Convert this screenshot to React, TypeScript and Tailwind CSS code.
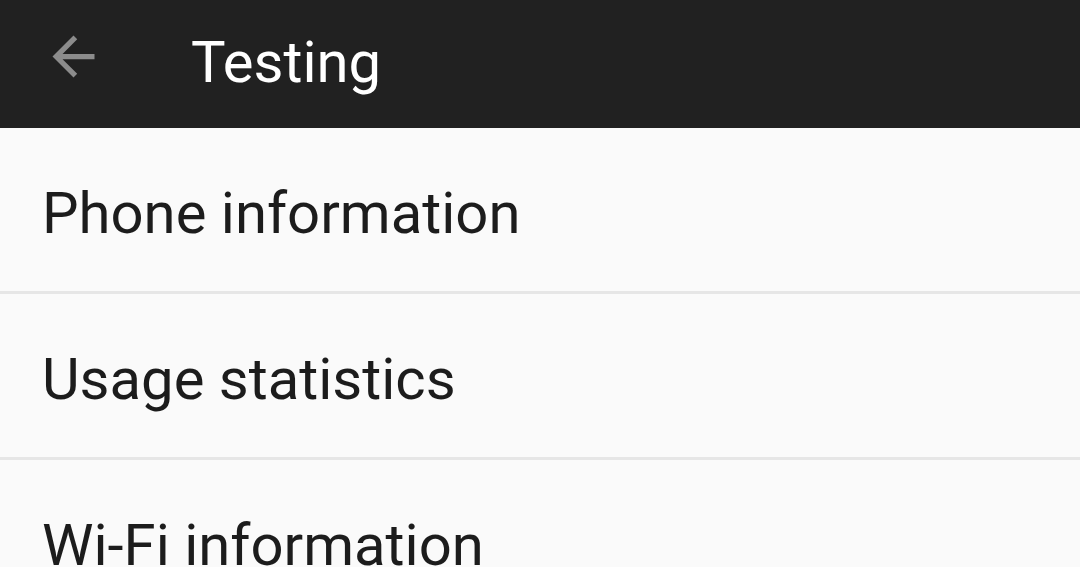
export default function App() {
  const rows = ["Phone information", "Usage statistics", "Wi-Fi information"];
  return (
    <div className="w-[1080px] h-[567px] overflow-hidden bg-[#fafafa]" style={{ fontFamily: "Roboto, sans-serif" }}>
      <div className="h-[128px] bg-[#212121] flex items-center">
        <div className="ml-[42px] mt-[-16px] w-[63px] h-[63px]">
          <svg viewBox="0 0 24 24" width="63" height="63" fill="#8c8c8c">
            <path d="M20 11H7.83l5.59-5.59L12 4l-8 8 8 8 1.41-1.41L7.83 13H20v-2z" />
          </svg>
        </div>
        <div className="ml-[86px] mt-[-4px] text-white text-[58px] leading-none">Testing</div>
      </div>
      {rows.map((r, i) => (
        <div key={r}>
          <div className="h-[163px] flex items-center pl-[42px] text-[#1c1c1c] text-[58px] leading-none">
            <span className="mt-[6px]">{r}</span>
          </div>
          {i < 2 && <div className="h-[3px] bg-[#e6e6e6]" />}
        </div>
      ))}
    </div>
  );
}
